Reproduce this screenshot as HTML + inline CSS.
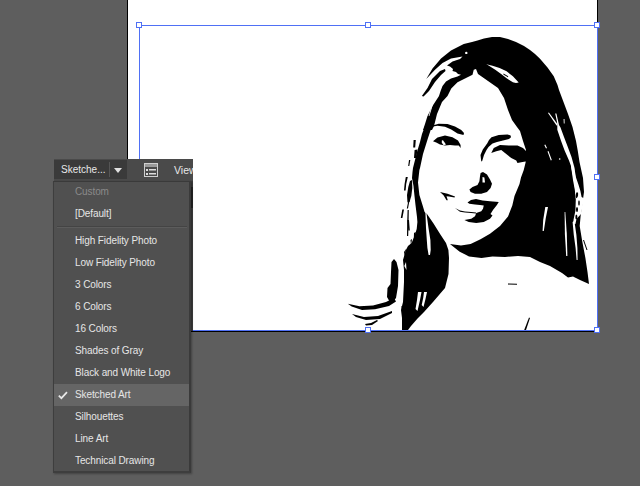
<!DOCTYPE html>
<html><head><meta charset="utf-8">
<style>
html,body{margin:0;padding:0;}
body{width:640px;height:486px;overflow:hidden;background:#5e5e5e;position:relative;font-family:"Liberation Sans",sans-serif;}
#ab{position:absolute;left:127px;top:-1px;width:469px;height:331px;background:#fff;border:1px solid #000;box-sizing:content-box;}
#art{position:absolute;left:0;top:0;width:640px;height:486px;}
#tb{position:absolute;left:54px;top:159px;width:139px;height:22px;background:#4a4a4a;overflow:hidden;}
#combo{position:absolute;left:0px;top:1px;width:73px;height:19px;background:#3a3a3a;}
#combo span{position:absolute;left:7px;top:4px;font-size:10px;color:#e8e8e8;}
#combo i{position:absolute;left:55px;top:2px;width:1px;height:15px;background:#555;}
#combo b{position:absolute;left:60px;top:8px;width:0;height:0;border-left:4px solid transparent;border-right:4px solid transparent;border-top:5px solid #e0e0e0;}
#view{position:absolute;left:120px;top:5px;font-size:10.5px;color:#e8e8e8;}
#menu{position:absolute;left:53px;top:181px;width:135px;height:289px;background:#505050;border-top:1px solid #3a3a3a;border-left:1px solid #3e3e3e;border-right:2px solid #3a3a3a;border-bottom:2px solid #3e3e3e;box-sizing:content-box;box-shadow:1px 1px 2px rgba(0,0,0,0.3);}
#band{position:absolute;left:189px;top:181px;width:4px;height:150px;background:#3c3c3c;}
#band i{position:absolute;left:0;top:6px;width:4px;height:21px;background:#242424;}
#menu div{position:absolute;left:0;width:135px;height:22px;line-height:20px;font-size:10px;color:#e6e6e6;text-indent:21px;white-space:nowrap;letter-spacing:-0.1px;}
#menu div.dis{color:#8a8a8a;}
#menu div.sel{background:#656565;}
#menu hr{position:absolute;left:3px;width:130px;top:44px;margin:0;border:0;border-top:1px solid #444;border-bottom:1px solid #5c5c5c;height:0;}
</style></head><body>
<div id="ab"></div>
<svg id="art" viewBox="0 0 640 486">
<g id="portrait" fill="#000">
<!-- main right hair + top + neck shadow -->
<path d="M476,69 L478,74 488,81 498,88 504,98 508,110 512,120 517,127 520,131 523,141 526,150 526,156 525.6,162.5 523.75,170 521,177.5 519.5,184 514.5,196 512.3,205.6 508,216.6 500,226 490,233.75 480.5,239.3 470.6,244 461,245.5 450,244 459.7,251.7 469,256.4 481.5,258 492.5,256.4 505,257 518,256 530,257 540,262 550,266 562,273 568,277.5 573,276.5 580,280 589,284 587.5,272 585.4,258 582,240 579.7,226 580.8,214 582.3,204 584,192 583,178 579.5,162 577.8,151 576,141 572.5,127 568,114 565,106 562,98 559,90 557.5,85 553.75,76.25 547.5,67.5 540,58.75 535,54 530,50 524,46 516,42 508,39 500,37 492,37 484,38.4 477.5,40.4 472,42 463.75,44 451,50.4 441,58.5 432.5,68.5 426.25,79 435,69.75 442.5,63 451,58.5 462.5,56.6 460,59 452.5,61.6 447,65.4 450,66.6 453,69 452.5,71 456,72 458,74 461,74.75 457.5,76.6 451,78.5 446,81.6 442.5,86 440.6,91 439,96 432.5,106 427.5,116 425,124 423,130 432,130 434,126 437,114 442,102 447.5,96 451.25,88.5 457.5,82.25 465,78.5 472.5,74.75 473.75,69.75 Z"/>
<!-- stroke 2 -->
<path d="M421.9,96 L427.5,88 432,79 440,71 445,69 445.5,71 441,75 435,82 429,91 423.5,96.5 Z"/>
<!-- left strand -->
<path d="M427,124 L425,126 422,134 420,142 417,152 415,160 413,168 412.5,172 412,178 413.5,186 414.4,195 415.5,205 417,217 417.4,222 416.7,229 414.5,236 411.6,243 408,246 405.9,250 403,260 404,270 404,282 403,302 401,310 402,318 402,330 408,330 411,326 418,318 424,312 433,302 445,288 448.5,274 449,258 448.4,250 446,243 440.4,234.6 433.2,223 427,214 424.6,212 422.5,205 419.4,195 418,182.5 419.4,170 420,168 423,154 428,138 432,126 434,124 Z"/>
<path d="M410,181 L412,180 412.3,188 411.3,196 409.5,202 407.5,202.5 407,195 408.3,187 Z"/>
<path d="M408.5,200 L409.6,200 408,208.5 406.8,208.5 Z M407.6,210 L408.8,210 408.6,222 408.2,236 407,236 407.2,222 Z M414,233 L415.6,232 416,240 415,247.5 413.5,247.5 Z M410.5,240 L412,239 411,246 Z M404,252 L406,249 405,257 Z"/>
<!-- side strand + curls -->
<path d="M391.5,262 L394,259 396.5,262 398.5,270 398,286 396,298 391,304 387,297 387.5,288 390.5,284 391,272 Z"/>
<path d="M347.8,303.8 L359.5,306.3 373,305.5 386,302 394,298 396,301.5 389,306 375,309.3 362,310 351.7,306.5 Z"/>
<path d="M352,314 L364,317 378,316 392,311 392,313 380,319 366,320 356,317 Z"/>
<path d="M365,324 L371,323 377,320 378,321 372,325 366,325.5 Z"/>
<!-- small wisps left -->
<path d="M413.6,140 L415.8,140 415.2,147.5 413.2,147.5 Z M414.6,150 L417.4,149.5 416.4,158 414,158 Z M405.8,177 L407.8,177 406.2,184 405.6,190.5 404,190.5 404.6,184 Z M402.3,209.5 L404,209.5 402.4,218 400.8,218 Z M407.3,220 L409,220 409.8,230.5 408.3,230.5 Z M401.5,306 L403,306 403,312 402,312 Z M409,160 L410.3,160 409.3,166 408.2,166 Z"/>
<!-- arm line -->
<path d="M529,317.5 L530,318 526,330 524.2,330 Z"/>
<path d="M508,283.5 L517,283.8 517,284.8 508,284.6 Z"/>
<path d="M583,240 L584,240 587.5,250 586.5,250 Z"/>
<!-- left eyebrow -->
<path d="M432.5,125.6 L438.75,123.8 447.5,124 455,126.5 461.25,130 464,133 463.5,135 457.5,133.5 451.25,129.5 445,126.75 437.5,125.8 433,126.5 Z"/>
<!-- left eye -->
<path d="M433,141.25 L437.5,137.5 445,135.6 452.5,137.25 458,140.6 460.6,145 460.6,148 458.75,145.6 455,145.6 450,145 445,145.6 440,144.4 436.25,142.5 Z"/>
<path d="M441.8,140.4 L443,140.2 446,144.6 443.6,145.2 441.8,142.8 Z" fill="#fff"/>
<!-- right eyebrow -->
<path d="M481.25,161.5 L480.5,155 482.8,149.4 487.3,143.3 489,140 491.5,137.3 498.75,135 507.5,134.4 510.6,135.6 511,137.3 509,139 503,140.6 497,142 492.5,143.6 488.5,147 486.5,150 484,155 482.2,161 Z"/>
<!-- right eye -->
<path d="M491.25,153 L493.75,148 500,145 508.75,145.6 517.5,145.6 523,148 527,152 527,161.25 522.5,161.9 517.5,163 516.25,160.6 511.25,158 505,153 501.25,150 496.25,151.25 Z"/>
<!-- nose -->
<path d="M483,172 L487,174.4 490,179.4 492,183.75 490.6,188 487,192 481.25,193.75 475,193.75 470.6,192 469.4,189.4 472.5,187 477.5,185 479.4,181.25 480,176.25 480.6,173 Z"/>
<path d="M482.5,177 L484.4,177.5 485,182.5 482.5,182.5 Z" fill="#fff"/>
<!-- mouth corner -->
<path d="M440,192 L447.5,193.8 455,196.6 454.5,197.6 449,196.6 446.5,196.3 447.8,200.3 446.5,200.3 443.5,195.3 Z"/>
<!-- mouth -->
<path d="M467.5,202.5 L471,200 476,199 482.5,200.6 490,201.25 498.75,201.9 496.9,205 493,210 490.5,214 492.5,215.6 490,218.75 483.75,221.9 476.25,223 468.75,221.9 464.4,220 471.25,218.75 475,216.25 476.25,213 481.25,211.25 483,208.75 483.75,205.6 480,205 475,204.4 469.4,203.75 Z"/>
<path d="M455,208 L460,210.6 465,211.5 471.25,211.9 476,212.5 476,213.5 471,213 465,212.6 460,211.8 Z"/>
<!-- white highlights -->
<g fill="#fff">
<path d="M571,166 L573,180 574.8,189.75 575.8,199.6 575.4,210.7 573.6,219.4 573,224 575.4,224 576.5,219 581,214 583,204 585,199 581.6,197 580.4,191 578.5,184.8 576,177.4 574,166 Z"/>
<path d="M486.3,64.2 L492.5,65.8 499.6,68.1 506.6,71.3 512.9,76.3 518.7,82.6 516,83 512.9,82.2 506.6,78.3 501.1,74 495.6,70 488.6,65.6 Z"/>
<path d="M557.3,125.4 L557.3,129.7 561,140.8 564.7,150.7 569,160.6 571,166 573,176 575,188 576,199 577.3,199 577,188 575.2,176 574,166 571.5,156.9 567.8,147 564,137 560.4,127.2 559,125 556.4,113.4 555.2,113.6 557,122 Z"/>
<path d="M548,113 L548.9,112.6 557,123.6 557.3,126 556.2,125 Z"/>
<path d="M544.3,145 L545.3,144.6 547,148 546,148.4 Z M547.5,151.5 L548.5,151 551.8,160 550.8,160.4 Z M563.6,119 L564.5,119 564.6,123.5 563.8,123.5 Z"/><circle cx="559.7" cy="159" r="0.8"/>
<path d="M564.6,212 L565.3,212 566.8,234 567.4,256 566.2,256 564.9,234 Z"/>
<path d="M572.6,222 L574.4,221 576.4,235 577.4,248 577.6,260 576.6,260 575.6,248 573.8,235 Z"/>
<path d="M545.3,207 L548,207 545.8,218 543.8,231 542.6,231 543.2,220 Z"/>
<path d="M425.4,212 L426.3,212 428.5,228 430.4,240 430.7,250 430,255 428.6,255 427.4,248 426.8,240 426,228 Z"/>

<path d="M418,292 L421.5,292 420,300 417.5,311 415.5,309 417,300 Z"/>
<path d="M424,292 L427,292 425.5,299 423.5,307 421.7,305 423.2,298 Z"/>

<path d="M433.5,99 L434.6,99 429.4,116 428.6,116 Z"/>
<circle cx="466.3" cy="52.9" r="1.2"/>
<path d="M406,262 L404.3,266 406.5,270 Z"/>
</g>
<path d="M503.5,73.6 L508.2,76.2 508,77.2 503.3,74.6 Z"/>
<ellipse cx="576.9" cy="195.2" rx="1.2" ry="3.1" transform="rotate(8 576.9 195.2)"/><ellipse cx="579" cy="203" rx="0.8" ry="2.8"/><ellipse cx="577" cy="209.5" rx="1" ry="2.5"/><ellipse cx="576.4" cy="217" rx="1" ry="2.5"/>

</g>
<g id="sel" fill="none" stroke="#4f70f5" stroke-width="1" shape-rendering="crispEdges">
<rect x="139.5" y="25.5" width="458" height="305"/>
<g fill="#fff">
<rect x="136.5" y="22.5" width="5" height="5"/><rect x="365.5" y="22.5" width="5" height="5"/><rect x="594.5" y="22.5" width="5" height="5"/>
<rect x="594.5" y="174.5" width="5" height="5"/><rect x="136.5" y="174.5" width="5" height="5"/>
<rect x="136.5" y="327.5" width="5" height="5"/><rect x="365.5" y="327.5" width="5" height="5"/><rect x="594.5" y="327.5" width="5" height="5"/>
</g></g>
</svg>
<div id="tb"><div id="combo"><span>Sketche...</span><i></i><b></b></div>
<svg style="position:absolute;left:90px;top:4px" width="15" height="15" viewBox="0 0 15 15"><rect x="0.5" y="0.5" width="13" height="13" fill="none" stroke="#cfcfcf"/><rect x="1" y="1" width="12" height="3" fill="#9a9a9a"/><rect x="2" y="6" width="2" height="2" fill="#ddd"/><rect x="5" y="6" width="7" height="1.5" fill="#ddd"/><rect x="2" y="10" width="2" height="2" fill="#ddd"/><rect x="5" y="10" width="7" height="1.5" fill="#ddd"/></svg>
<span id="view">View</span></div>
<div id="band"><i></i></div>
<div id="menu">
<div class="dis" style="top:0px">Custom</div>
<div style="top:22px">[Default]</div>
<hr>
<div style="top:49px">High Fidelity Photo</div>
<div style="top:71px">Low Fidelity Photo</div>
<div style="top:93px">3 Colors</div>
<div style="top:115px">6 Colors</div>
<div style="top:137px">16 Colors</div>
<div style="top:159px">Shades of Gray</div>
<div style="top:181px">Black and White Logo</div>
<div class="sel" style="top:202px;line-height:22px">Sketched Art</div>
<div style="top:224px;line-height:22px">Silhouettes</div>
<div style="top:246px;line-height:22px">Line Art</div>
<div style="top:268px;line-height:22px">Technical Drawing</div>
<svg style="position:absolute;left:4px;top:209px" width="10" height="9" viewBox="0 0 10 9"><path d="M0.8 4.6 L3.4 7.2 L9 1.2" fill="none" stroke="#e8e8e8" stroke-width="1.7"/></svg>
</div>
</body></html>
